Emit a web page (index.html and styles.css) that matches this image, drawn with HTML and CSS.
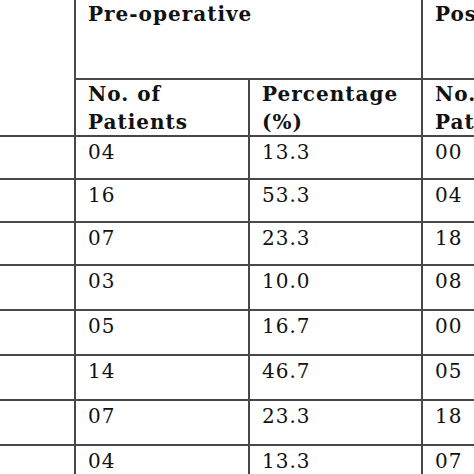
FILE: index.html
```html
<!DOCTYPE html>
<html>
<head>
<meta charset="utf-8">
<link rel="stylesheet" href="styles.css">
</head>
<body>
<div class="frame">
<table class="tbl">
  <colgroup>
    <col class="c0"><col class="c1"><col class="c2"><col class="c3">
  </colgroup>
  <tr class="grp">
    <td class="lab"></td>
    <th colspan="2" class="g">Pre-operative</th>
    <th class="g post">Post-operative</th>
  </tr>
  <tr class="sub">
    <td class="lab"></td>
    <th><div class="hd">No. of Patients</div></th>
    <th><div class="hd">Percentage (%)</div></th>
    <th><div class="hd">No. of Patients</div></th>
  </tr>
  <tr class="r1"><td class="lab"></td><td>04</td><td>13.3</td><td>00</td></tr>
  <tr class="r1"><td class="lab"></td><td>16</td><td>53.3</td><td>04</td></tr>
  <tr class="r1"><td class="lab"></td><td>07</td><td>23.3</td><td>18</td></tr>
  <tr class="r2"><td class="lab"></td><td>03</td><td>10.0</td><td>08</td></tr>
  <tr class="r2"><td class="lab"></td><td>05</td><td>16.7</td><td>00</td></tr>
  <tr class="r2"><td class="lab"></td><td>14</td><td>46.7</td><td>05</td></tr>
  <tr class="r2"><td class="lab"></td><td>07</td><td>23.3</td><td>18</td></tr>
  <tr class="r2"><td class="lab"></td><td>04</td><td>13.3</td><td>07</td></tr>
</table>
</div>
</body>
</html>
```

FILE: styles.css
```css
html, body {
  margin: 0;
  padding: 0;
  background: #fff;
}
.frame {
  width: 474px;
  height: 474px;
  overflow: hidden;
}
.tbl {
  border-collapse: collapse;
  table-layout: fixed;
  width: 624px;
  font-family: "DejaVu Serif", "Liberation Serif", serif;
  font-size: 20px;
  letter-spacing: 1px;
  color: #111;
}
.c0 { width: 75px; }
.c1 { width: 174px; }
.c2 { width: 173px; }
.c3 { width: 202px; }
.tbl td, .tbl th {
  border: 2px solid #484848;
  padding: 3px 8px 0 12px;
  text-align: left;
  vertical-align: top;
  line-height: 24px;
}
.tbl th {
  font-weight: bold;
  line-height: 28px;
  padding-top: 0;
}
.hd {
  height: 50px;
}
.tbl .lab {
  border-left: none;
}
.grp td, .grp th {
  border-top: none;
}
.grp .lab, .sub .lab {
  border-top: none;
  border-bottom: none;
}
.grp { height: 79px; }
.sub { height: 57px; }
.r1 { height: 43px; }
.r2 { height: 45px; }
.post { border-bottom: none; }
```
